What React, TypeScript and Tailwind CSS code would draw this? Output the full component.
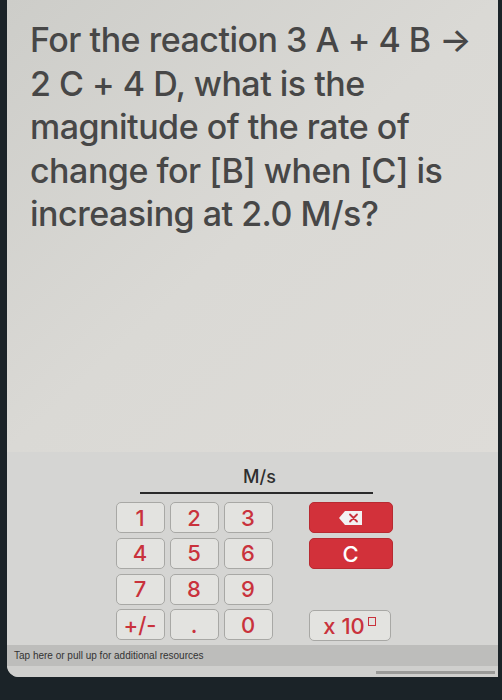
import React from 'react'

const KEYS = ['1', '2', '3', '4', '5', '6', '7', '8', '9', '+/-', '.', '0']

function Key({ label }: { label: string }) {
  return (
    <div className="h-[31px] w-[49px] rounded-[5px] border border-[#a8a8a5] bg-[#e3e3e0] flex items-center justify-center text-[22px] text-[#c9323c] leading-none font-medium">
      {label}
    </div>
  )
}

export default function App() {
  return (
    <div
      className="w-[502px] h-[700px] bg-[#1b2328] flex flex-col overflow-hidden"
      style={{ fontFamily: 'Inter, "Liberation Sans", Arial, sans-serif' }}
    >
      <div className="ml-[7px] mr-[4px] h-[677px] flex flex-col rounded-bl-[12px] overflow-hidden bg-[#d6d6d3]">
        {/* Question */}
        <div className="h-[452px] bg-gradient-to-br from-[#cdcdc9] via-[#dad9d5] to-[#dedcd8] pl-[23px] pr-1 pt-[18px]">
          <p className="text-[34px] leading-[43.5px] text-[#474747] font-medium tracking-[-0.5px] whitespace-nowrap">
            For the reaction 3 A + 4 B →<br />
            2 C + 4 D, what is the<br />
            magnitude of the rate of<br />
            change for [B] when [C] is<br />
            increasing at 2.0 M/s?
          </p>
        </div>

        {/* Answer keypad */}
        <div className="h-[193px] bg-[#d5d5d3] flex flex-col items-center">
          <div className="mt-[15px] text-[18px] leading-[20px] text-[#2e2e2e] pl-[14px] font-medium">M/s</div>
          <div className="mt-[5px] ml-[8px] w-[233px] border-t-2 border-[#2a2a2a]" />
          <div className="mt-[8px] ml-[3px] flex gap-[36px]">
            <div className="grid grid-cols-3 gap-x-[5px] gap-y-[4px]">
              {KEYS.map((k) => (
                <Key key={k} label={k} />
              ))}
            </div>
            <div className="flex flex-col gap-[5px] w-[84px]">
              <div className="h-[31px] rounded-[5px] border border-[#b82a31] bg-[#d2313a] flex items-center justify-center">
                <svg width="26" height="16" viewBox="0 0 26 16">
                  <path d="M7 1 H24 V15 H7 L1 8 Z" fill="#f2f2f2" />
                  <path d="M12 4.5 L19 11.5 M19 4.5 L12 11.5" stroke="#c9323c" strokeWidth="1.8" strokeLinecap="round" />
                </svg>
              </div>
              <div className="h-[31px] rounded-[5px] border border-[#b82a31] bg-[#d2313a] flex items-center justify-center text-[22px] text-white leading-none font-medium">
                C
              </div>
              <div className="h-[31px]" />
              <div className="h-[31px] w-[82px] rounded-[5px] border border-[#a8a8a5] bg-[#e3e3e0] flex items-center justify-center text-[22px] text-[#c9323c] leading-none font-medium">
                x 10
                <span className="ml-[3px] -mt-[8px] inline-block w-[8px] h-[9px] border border-[#c9323c]" />
              </div>
            </div>
          </div>
        </div>

        {/* Resource bar */}
        <div
          className="h-[21px] bg-[#bdbdbb] pl-[7px] flex items-center text-[10px] text-[#333] leading-none"
          style={{ fontFamily: '"Liberation Sans", Arial, sans-serif' }}
        >
          Tap here or pull up for additional resources
        </div>
        <div className="flex-1 bg-[#cfcfcd] flex items-end justify-end pr-[3px] pb-[3px]">
          <div className="w-[119px] h-[3px] bg-[#9a9a98]" />
        </div>
      </div>
    </div>
  )
}
